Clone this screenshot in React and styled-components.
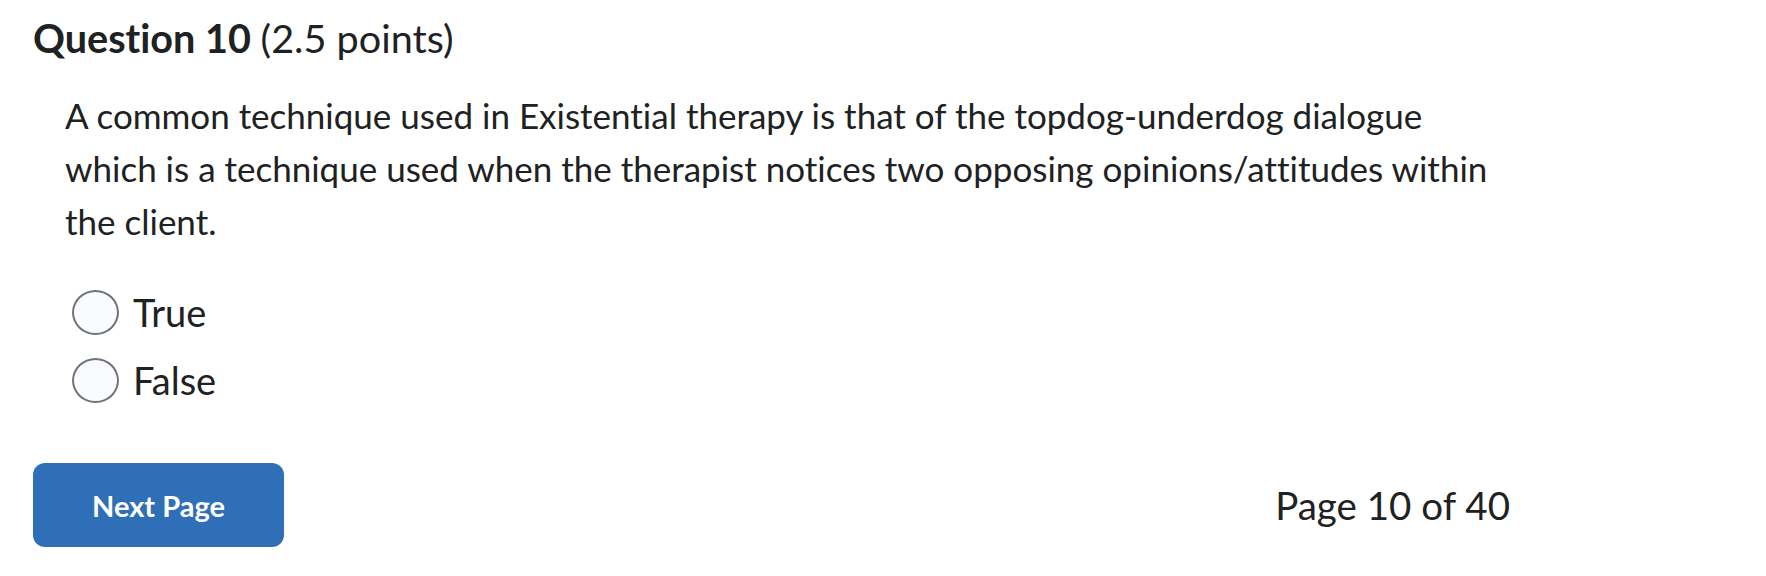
import React from "react";
import styled, { createGlobalStyle } from "styled-components";

const GlobalStyle = createGlobalStyle`
  html, body {
    margin: 0;
    padding: 0;
    background: #ffffff;
  }
  body {
    font-family: Lato, "Open Sans", "Liberation Sans", sans-serif;
    font-variant-ligatures: none;
    font-feature-settings: "liga" 0, "clig" 0, "dlig" 0;
    color: #202122;
  }
  button {
    font-variant-ligatures: none;
    font-feature-settings: "liga" 0, "clig" 0, "dlig" 0;
  }
`;

const Page = styled.main`
  box-sizing: border-box;
  width: 1510px;
  padding: 15px 0 0 33px;
  display: flex;
  flex-direction: column;
`;

const QuestionTitle = styled.h2`
  margin: 0;
  font-size: 39.6px;
  line-height: 46px;
  font-weight: 700;
  color: #202122;
`;

const Points = styled.span`
  font-weight: 400;
`;

const Prompt = styled.p`
  margin: 28px 0 0 32px;
  font-size: 35px;
  line-height: 53px;
  font-weight: 400;
`;

const OptionList = styled.div`
  margin: 30px 0 0 39px;
  display: flex;
  flex-direction: column;
`;

const OptionRow = styled.label`
  height: 68px;
  display: flex;
  align-items: center;
  gap: 14px;
  cursor: pointer;
`;

const RadioCircle = styled.span`
  box-sizing: border-box;
  width: 47px;
  height: 45px;
  border-radius: 50%;
  border: 2px solid #6e7477;
  background: #f9fbff;
  flex: none;
`;

const OptionText = styled.span`
  font-size: 38px;
  line-height: 48px;
`;

const Footer = styled.div`
  margin-top: 49px;
  display: flex;
  align-items: center;
  justify-content: space-between;
`;

const NextButton = styled.button`
  width: 251px;
  height: 84px;
  border: none;
  border-radius: 12px;
  background: #2f6fb8;
  color: #ffffff;
  font-family: Lato, "Open Sans", "Liberation Sans", sans-serif;
  font-size: 29px;
  font-weight: 700;
  cursor: pointer;
`;

const PageCounter = styled.span`
  font-size: 38.5px;
  line-height: 46px;
`;

const options = ["True", "False"];

export default function App() {
  return (
    <>
      <GlobalStyle />
      <Page>
        <QuestionTitle>
          Question 10 <Points>(2.5 points)</Points>
        </QuestionTitle>
        <Prompt>
          A common technique used in Existential therapy is that of the
          topdog-underdog dialogue which is a technique used when the therapist
          notices two opposing opinions/attitudes within the client.
        </Prompt>
        <OptionList>
          {options.map((opt) => (
            <OptionRow key={opt}>
              <RadioCircle />
              <OptionText>{opt}</OptionText>
            </OptionRow>
          ))}
        </OptionList>
        <Footer>
          <NextButton>Next Page</NextButton>
          <PageCounter>Page 10 of 40</PageCounter>
        </Footer>
      </Page>
    </>
  );
}
